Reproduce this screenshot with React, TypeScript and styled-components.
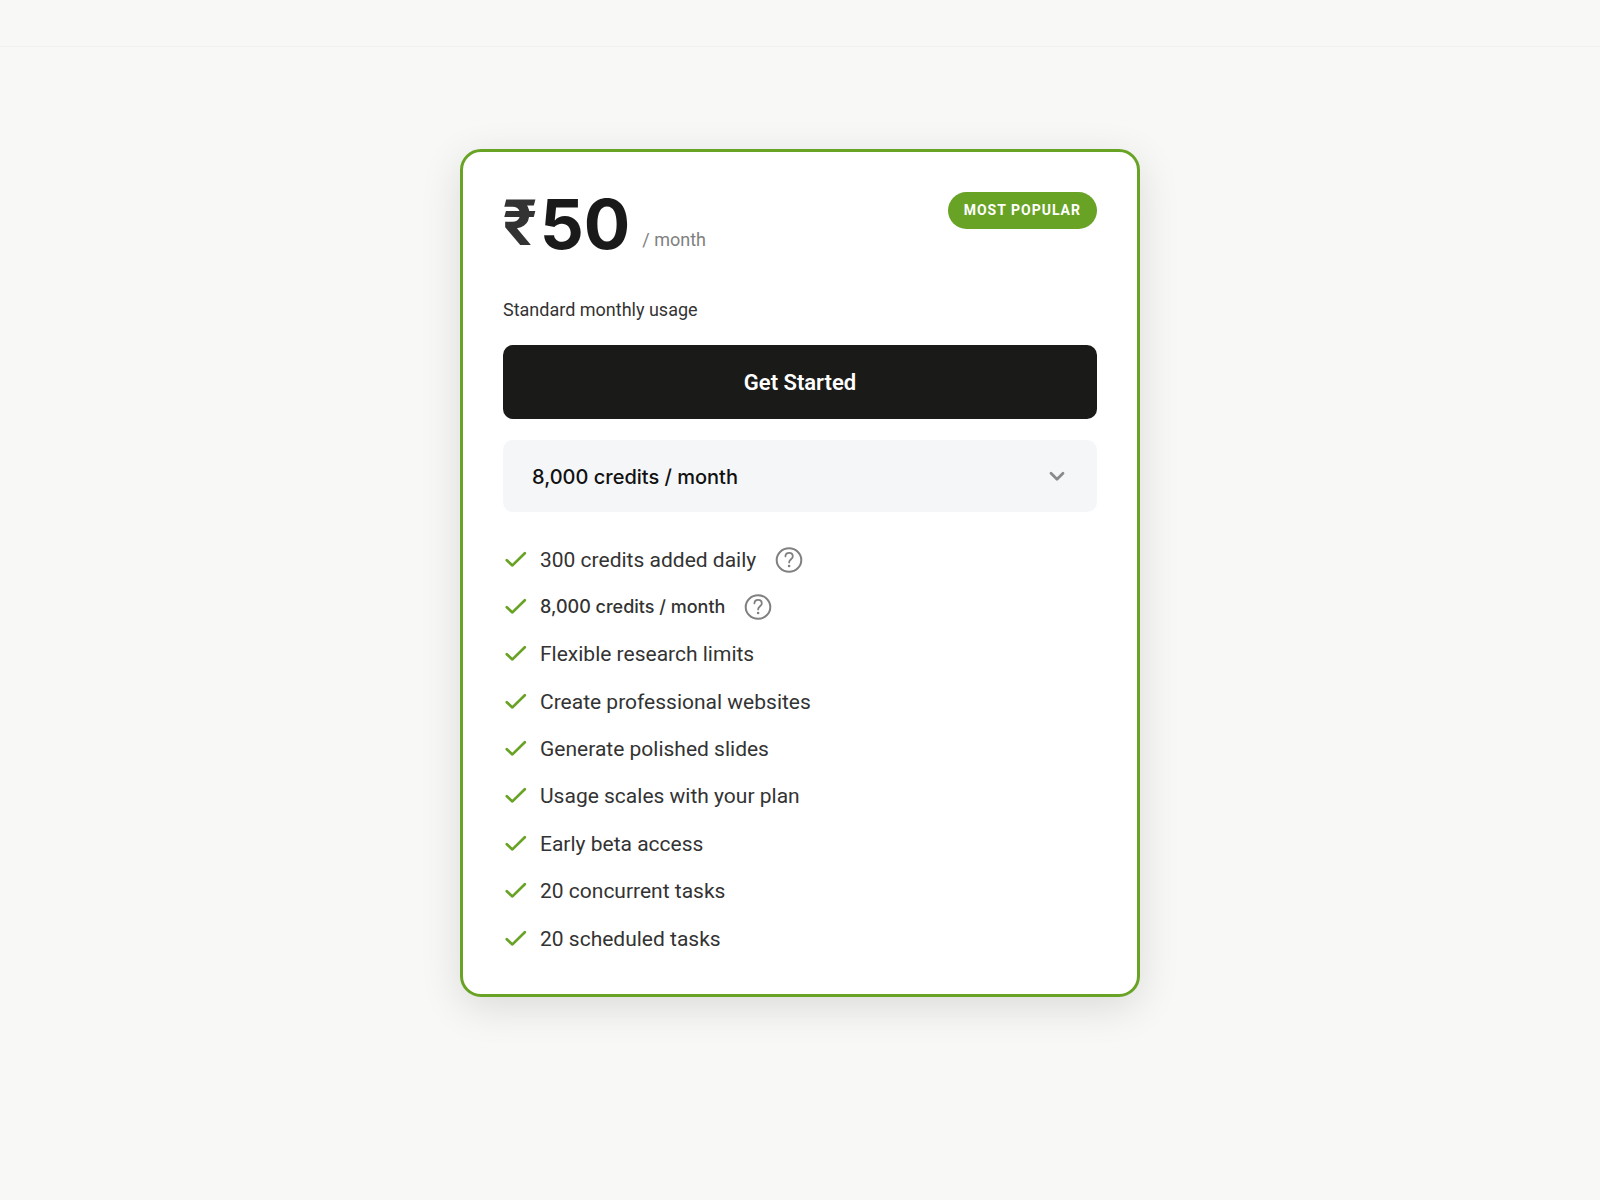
import React, { useState } from "react";
import styled, { createGlobalStyle } from "styled-components";

const GlobalStyle = createGlobalStyle`
  *, *::before, *::after { box-sizing: border-box; }
  body {
    margin: 0;
    background: #f8f8f6;
    color: #333;
    font-family: Roboto, "Liberation Sans", sans-serif;
    -webkit-font-smoothing: antialiased;
  }
`;

const TopBar = styled.header`
  height: 47px;
  border-bottom: 1px solid #f0f0ee;
`;

const Page = styled.main`
  display: flex;
  justify-content: center;
  padding: 102px 24px;
`;

const Card = styled.article`
  width: 100%;
  max-width: 680px;
  padding: 40px;
  background: #fff;
  border: 3px solid #69a326;
  border-radius: 21px;
  box-shadow: 0 10px 42px rgba(0, 0, 0, 0.12);
`;

const CardHead = styled.div`
  display: flex;
  justify-content: space-between;
  align-items: flex-start;
`;

const Price = styled.p`
  display: flex;
  align-items: flex-end;
  margin: 0;
`;

const Currency = styled.span`
  font-size: 64px;
  font-weight: 700;
  line-height: 64px;
`;

const Amount = styled.span`
  margin-left: 3px;
  color: #1a1a1a;
  font-family: Inter, sans-serif;
  font-size: 69px;
  font-weight: 700;
  line-height: 64px;
`;

const Period = styled.span`
  margin-left: 12px;
  color: #808080;
  font-size: 18px;
  line-height: 32px;
`;

const Badge = styled.span`
  padding: 0 16px;
  border-radius: 19px;
  background: #69a326;
  color: #fff;
  font-size: 14px;
  font-weight: 700;
  letter-spacing: 1px;
  line-height: 37px;
`;

const Summary = styled.p`
  margin: 42px 0 23px;
  font-size: 18px;
  line-height: 24px;
`;

const StartButton = styled.button`
  display: block;
  width: 100%;
  height: 74px;
  border: 0;
  border-radius: 10px;
  background: #1a1a18;
  color: #fff;
  font: 600 22px Roboto, sans-serif;
  cursor: pointer;
`;

const SelectBox = styled.div`
  display: grid;
  align-items: center;
  margin-top: 21px;

  > * { grid-area: 1 / 1; }

  > svg {
    justify-self: end;
    margin-right: 30px;
    pointer-events: none;
  }
`;

const CreditSelect = styled.select`
  width: 100%;
  height: 72px;
  padding: 2px 64px 0 29px;
  appearance: none;
  border: 0;
  border-radius: 10px;
  background: #f4f6f8;
  color: #111;
  font: 500 20px Inter, sans-serif;
`;

const Features = styled.ul`
  display: grid;
  align-content: space-between;
  min-height: 410px;
  margin: 32px 0 0;
  padding: 0;
  list-style: none;
`;

const Feature = styled.li<{ $compact?: boolean }>`
  display: flex;
  align-items: center;
  height: 31px;
  font-family: ${(p) => (p.$compact ? "Inter" : "Roboto")}, sans-serif;
  font-size: ${(p) => (p.$compact ? 18 : 21)}px;
  font-weight: ${(p) => (p.$compact ? 500 : 400)};

  > svg { flex: none; margin-right: 11px; }
`;

const HelpButton = styled.button`
  display: flex;
  margin-left: 19px;
  padding: 0;
  border: 0;
  background: none;
  color: #808080;
  cursor: help;
`;

const CheckIcon = () => (
  <svg width="26" height="26" viewBox="0 0 26 26" fill="none" aria-hidden="true">
    <path d="M3.8 13.2 L9.4 18.4 L21.8 6.2" stroke="#69a326" strokeWidth="2.7" strokeLinecap="round" strokeLinejoin="round" />
  </svg>
);

const HelpIcon = () => (
  <svg width="28" height="28" viewBox="0 0 28 28" fill="none" stroke="currentColor" strokeWidth="2" strokeLinecap="round" aria-hidden="true">
    <ellipse cx="14" cy="14" rx="12.3" ry="11.8" />
    <path d="M10.4 10.4 C10.6 5.8 17.8 5.8 17.8 10.4 C17.8 13.2 14.1 13.4 14.1 16.4" strokeWidth="1.8" />
    <circle cx="14.1" cy="20" r="0.6" strokeWidth="1.4" />
  </svg>
);

const ChevronIcon = () => (
  <svg width="20" height="20" viewBox="0 0 20 20" fill="none" aria-hidden="true">
    <path d="M4 7.2 L10 13.2 L16 7.2" stroke="#8a8a8c" strokeWidth="2.8" strokeLinecap="round" strokeLinejoin="round" />
  </svg>
);

type FeatureItem = { text: string; help?: boolean; compact?: boolean };

const features: FeatureItem[] = [
  { text: "300 credits added daily", help: true },
  { text: "8,000 credits / month", help: true, compact: true },
  { text: "Flexible research limits" },
  { text: "Create professional websites" },
  { text: "Generate polished slides" },
  { text: "Usage scales with your plan" },
  { text: "Early beta access" },
  { text: "20 concurrent tasks" },
  { text: "20 scheduled tasks" },
];

export default function App() {
  const [credits, setCredits] = useState("8000");
  return (
    <>
      <GlobalStyle />
      <TopBar />
      <Page>
        <Card>
          <CardHead>
            <Price>
              <Currency>₹</Currency>
              <Amount>50</Amount>
              <Period>/ month</Period>
            </Price>
            <Badge>MOST POPULAR</Badge>
          </CardHead>
          <Summary>Standard monthly usage</Summary>
          <StartButton type="button">Get Started</StartButton>
          <SelectBox>
            <CreditSelect aria-label="Credits" value={credits} onChange={(e) => setCredits(e.target.value)}>
              <option value="8000">8,000 credits / month</option>
            </CreditSelect>
            <ChevronIcon />
          </SelectBox>
          <Features>
            {features.map((f) => (
              <Feature key={f.text} $compact={f.compact}>
                <CheckIcon />
                {f.text}
                {f.help && (
                  <HelpButton type="button" aria-label="Help">
                    <HelpIcon />
                  </HelpButton>
                )}
              </Feature>
            ))}
          </Features>
        </Card>
      </Page>
    </>
  );
}
